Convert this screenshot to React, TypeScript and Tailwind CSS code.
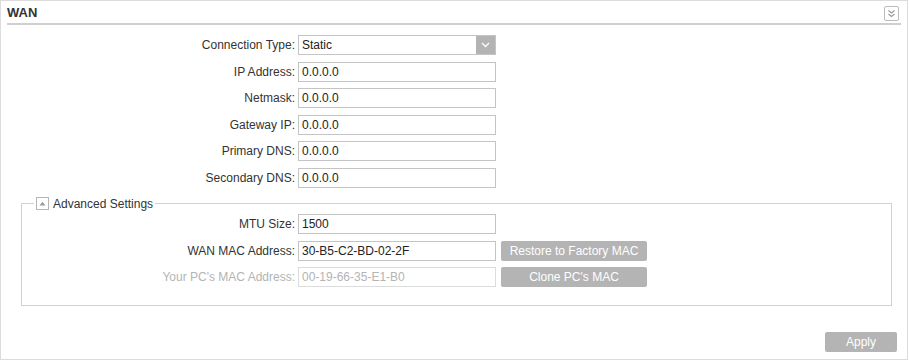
import React from 'react';

const font = { fontFamily: '"Liberation Sans", Arial, sans-serif' };

function Row({ label, value, disabled, select, children, labelW }: { label: string; value: string; disabled?: boolean; select?: boolean; children?: React.ReactNode; labelW: string }) {
  return (
    <div className="flex items-center h-[20px]">
      <label className={`${labelW} text-right pr-[3px] text-[12px] ${disabled ? 'text-[#b4b4b4]' : 'text-[#333]'}`}>{label}:</label>
      {select ? (
        <div className="flex w-[198px] h-[20px] border border-[#c4c4c4] bg-white">
          <span className="flex-1 pl-[3px] leading-[18px] text-[12px] text-[#222]">{value}</span>
          <span className="w-[19px] h-full bg-[#b3b3b3] flex items-center justify-center">
            <svg width="9" height="6" viewBox="0 0 9 6"><path d="M1 1 L4.5 4.5 L8 1" stroke="#fff" strokeWidth="1.3" fill="none" /></svg>
          </span>
        </div>
      ) : (
        <input
          readOnly
          disabled={disabled}
          value={value}
          className={`w-[198px] h-[20px] px-[3px] text-[12px] outline-none border ${disabled ? 'border-[#dcdcdc] text-[#b4b4b4] bg-white' : 'border-[#c4c4c4] text-[#222] bg-white'}`}
        />
      )}
      {children}
    </div>
  );
}

function GrayButton({ children, className }: { children: React.ReactNode; className: string }) {
  return (
    <button className={`h-[20px] rounded-[2px] bg-[#b4b4b4] text-white text-[12px] ${className}`}>{children}</button>
  );
}

export default function App() {
  return (
    <div style={font} className="w-[909px] h-[361px] bg-white">
      <div className="w-[908px] h-[360px] border border-[#dcdcdc] relative">
        <div className="mx-[6px] h-[24px] border-b-2 border-[#cfcfcf] flex items-center justify-between">
          <span className="text-[13px] font-bold text-[#333] pt-[2px]">WAN</span>
          <span className="w-[15px] h-[15px] mr-[2px] mt-[2px] border border-[#bcbcbc] rounded-[2px] flex items-center justify-center">
            <svg width="9" height="9" viewBox="0 0 9 9"><path d="M1.5 1.5 L4.5 4 L7.5 1.5 M1.5 5 L4.5 7.5 L7.5 5" stroke="#999" strokeWidth="1.1" fill="none" /></svg>
          </span>
        </div>

        <div className="mt-[10px] flex flex-col gap-[6.6px]">
          <Row labelW="w-[297px]" label="Connection Type" value="Static" select />
          <Row labelW="w-[297px]" label="IP Address" value="0.0.0.0" />
          <Row labelW="w-[297px]" label="Netmask" value="0.0.0.0" />
          <Row labelW="w-[297px]" label="Gateway IP" value="0.0.0.0" />
          <Row labelW="w-[297px]" label="Primary DNS" value="0.0.0.0" />
          <Row labelW="w-[297px]" label="Secondary DNS" value="0.0.0.0" />
        </div>

        <fieldset className="mt-[7px] ml-[20px] w-[871px] h-[111px] border border-[#d0d0d8] pt-[1px]">
          <legend className="ml-[12px] px-[2px] flex items-center gap-[4px] text-[12px] text-[#333]">
            <span className="w-[13px] h-[13px] border border-[#b5b5b5] flex items-center justify-center">
              <svg width="7" height="5" viewBox="0 0 7 5"><path d="M0.5 4.5 L3.5 0.8 L6.5 4.5 Z" fill="#9a9a9a" /></svg>
            </span>
            <span>Advanced Settings</span>
          </legend>
          <div className="flex flex-col gap-[6.6px]">
            <Row labelW="w-[276px]" label="MTU Size" value="1500" />
            <Row labelW="w-[276px]" label="WAN MAC Address" value="30-B5-C2-BD-02-2F">
              <GrayButton className="ml-[5px] w-[146px]">Restore to Factory MAC</GrayButton>
            </Row>
            <Row labelW="w-[276px]" label="Your PC's MAC Address" value="00-19-66-35-E1-B0" disabled>
              <GrayButton className="ml-[5px] w-[146px]">Clone PC's MAC</GrayButton>
            </Row>
          </div>
        </fieldset>

        <div className="flex justify-end mt-[26px] mr-[10px]">
          <GrayButton className="w-[72px]">Apply</GrayButton>
        </div>
      </div>
    </div>
  );
}
